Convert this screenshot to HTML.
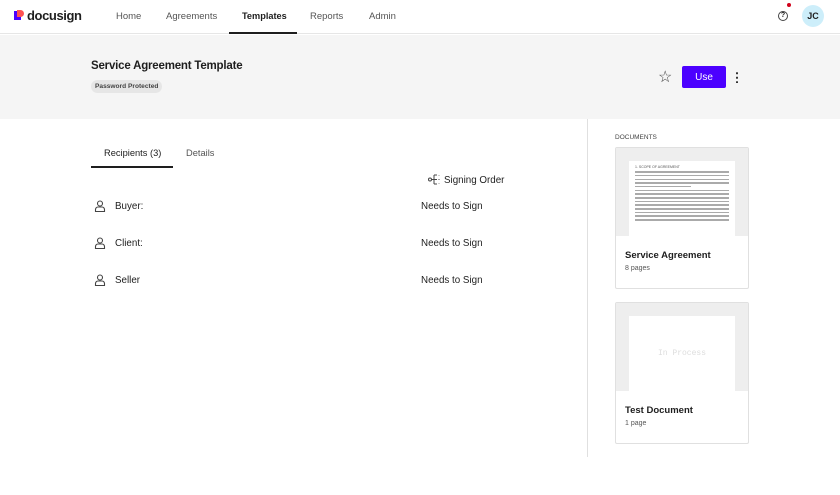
<!DOCTYPE html>
<html><head><style>
*{box-sizing:border-box;margin:0;padding:0}
body{width:840px;height:495px;background:#fff;font-family:"Liberation Sans",sans-serif;color:#1e1e1e;position:relative;overflow:hidden}
.a{position:absolute}
.nav{font-size:9.5px;color:#555;top:11px}
.lines div{height:1.5px;background:#aaa;margin:2.2px 0}
.r{font-size:9.8px}
</style></head><body>
<div class="a" style="left:0;top:0;width:840px;height:34px;border-bottom:1px solid #e6e6e6"></div>
<div class="a" style="left:14px;top:11px;width:7px;height:9px;background:#4c00ff"></div>
<div class="a" style="left:17px;top:10px;width:7px;height:7px;background:#ff5252;border-radius:0 4px 4px 0"></div>
<div class="a" style="left:27px;top:8px;font-size:13px;font-weight:bold;letter-spacing:-0.4px">docusign</div>
<div class="a nav" style="left:116px">Home</div>
<div class="a nav" style="left:166px">Agreements</div>
<div class="a nav" style="left:242px;color:#1e1e1e;font-weight:bold;font-size:9.2px">Templates</div>
<div class="a" style="left:229px;top:32px;width:68px;height:2px;background:#1e1e1e"></div>
<div class="a nav" style="left:310px">Reports</div>
<div class="a nav" style="left:369px">Admin</div>
<div class="a" style="left:778px;top:11px;width:10px;height:10px;border:1.3px solid #444;border-radius:50%;font-size:7px;text-align:center;line-height:8px;font-weight:bold">?</div>
<div class="a" style="left:787px;top:3px;width:4px;height:4px;background:#d0021b;border-radius:50%"></div>
<div class="a" style="left:802px;top:5px;width:22px;height:22px;background:#cdeefa;border-radius:50%;font-size:9px;font-weight:bold;text-align:center;line-height:22px">JC</div>
<div class="a" style="left:0;top:35px;width:840px;height:84px;background:#f5f5f5"></div>
<div class="a" style="left:91px;top:60px;font-size:11.5px;font-weight:bold;letter-spacing:-0.2px">Service Agreement Template</div>
<div class="a" style="left:91px;top:80px;background:#e6e6e6;border-radius:8px;font-size:6.6px;font-weight:bold;color:#444;padding:3px 4px">Password Protected</div>
<div class="a" style="left:658px;top:67px;font-size:16px;color:#444">☆</div>
<div class="a" style="left:682px;top:66px;width:44px;height:22px;background:#4c00ff;border-radius:2px;color:#fff;font-size:10px;display:flex;align-items:center;justify-content:center">Use</div>
<div class="a" style="left:736px;top:71px;width:2px;height:12px;background:radial-gradient(circle,#333 1px,transparent 1.2px) 0 0/2px 4.5px"></div>
<div class="a" style="left:104px;top:148px;font-size:9.3px">Recipients (3)</div>
<div class="a" style="left:91px;top:166px;width:82px;height:2px;background:#1e1e1e"></div>
<div class="a" style="left:186px;top:148px;font-size:9.3px;color:#555">Details</div>
<svg class="a" style="left:428px;top:174px" width="12" height="11" viewBox="0 0 12 11" fill="none" stroke="#444" stroke-width="1"><circle cx="2" cy="5.5" r="1.5"/><path d="M3.5 5.5h2M6 1h3M6 1v9M6 5.5h3M6 10h3M11 1v0.5M11 5v1M11 9.5v0.5"/></svg>
<div class="a" style="left:444px;top:175px;font-size:9.8px">Signing Order</div>
<svg class="a" style="left:94px;top:200px" width="12" height="12" viewBox="0 0 12 12" fill="none" stroke="#444" stroke-width="1.1"><circle cx="6" cy="3.5" r="2.5"/><path d="M1.5 11.5v-2a2.5 2.5 0 0 1 2.5-2.5h4a2.5 2.5 0 0 1 2.5 2.5v2z"/></svg>
<div class="a r" style="left:115px;top:201px">Buyer:</div>
<div class="a r" style="left:421px;top:201px">Needs to Sign</div>
<svg class="a" style="left:94px;top:237px" width="12" height="12" viewBox="0 0 12 12" fill="none" stroke="#444" stroke-width="1.1"><circle cx="6" cy="3.5" r="2.5"/><path d="M1.5 11.5v-2a2.5 2.5 0 0 1 2.5-2.5h4a2.5 2.5 0 0 1 2.5 2.5v2z"/></svg>
<div class="a r" style="left:115px;top:238px">Client:</div>
<div class="a r" style="left:421px;top:238px">Needs to Sign</div>
<svg class="a" style="left:94px;top:274px" width="12" height="12" viewBox="0 0 12 12" fill="none" stroke="#444" stroke-width="1.1"><circle cx="6" cy="3.5" r="2.5"/><path d="M1.5 11.5v-2a2.5 2.5 0 0 1 2.5-2.5h4a2.5 2.5 0 0 1 2.5 2.5v2z"/></svg>
<div class="a r" style="left:115px;top:275px">Seller</div>
<div class="a r" style="left:421px;top:275px">Needs to Sign</div>
<div class="a" style="left:587px;top:119px;width:1px;height:338px;background:#e0e0e0"></div>
<div class="a" style="left:615px;top:134px;font-size:6.5px;color:#444">DOCUMENTS</div>
<div class="a" style="left:615px;top:147px;width:134px;height:142px;border:1px solid #e0e0e0;border-radius:2px;background:#fff">
 <div style="height:88px;background:#eee;position:relative"><div style="position:absolute;left:13px;top:13px;width:106px;height:75px;background:#fff;padding:4px 6px"><div style="font-size:3.5px;color:#555">1. SCOPE OF AGREEMENT</div><div class="lines"><div></div><div></div><div></div><div></div><div style="width:60%"></div><div></div><div></div><div></div><div></div><div></div><div></div><div></div><div></div><div></div></div></div></div>
 <div style="padding:14px 9px 0;font-size:9.5px;font-weight:bold">Service Agreement</div>
 <div style="padding:4px 9px;font-size:7px;color:#555">8 pages</div>
</div>
<div class="a" style="left:615px;top:302px;width:134px;height:142px;border:1px solid #e0e0e0;border-radius:2px;background:#fff">
 <div style="height:88px;background:#eee;position:relative"><div style="position:absolute;left:13px;top:13px;width:106px;height:75px;background:#fff;text-align:center;font-family:'Liberation Mono';font-size:8px;color:#ddd;padding-top:33px">In Process</div></div>
 <div style="padding:14px 9px 0;font-size:9.5px;font-weight:bold">Test Document</div>
 <div style="padding:4px 9px;font-size:7px;color:#555">1 page</div>
</div>
</body></html>
